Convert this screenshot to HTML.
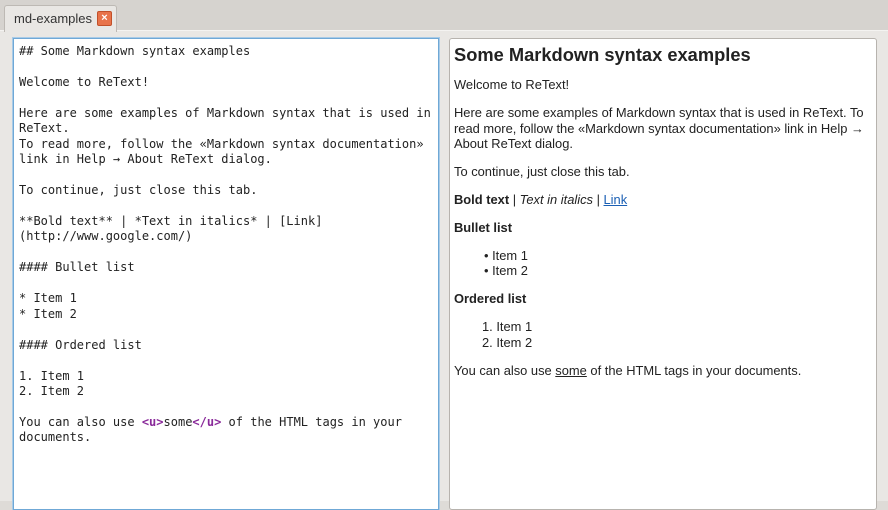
<!DOCTYPE html>
<html><head><style>
body{margin:0;width:888px;height:500px;background:#dedbd7;position:relative;overflow:hidden;font-family:"Liberation Sans",sans-serif}
.tabbar{position:absolute;left:0;top:0;width:888px;height:30px;background:#d6d3cf}
.pane{position:absolute;left:0;top:30px;width:888px;height:470px;background:#e9e7e4;border-top:1px solid #f4f3f1}
.tab{position:absolute;left:4px;top:5px;width:111px;height:26px;background:#e9e7e4;border:1px solid #bdb9b4;border-bottom:none;border-radius:3px 3px 0 0}
.tab span{position:absolute;left:9px;top:5px;font-size:13px;color:#333}
.x{position:absolute;left:92px;top:5px;width:13px;height:13px;background:#e8734a;border:1px solid #c1502a;border-radius:2px;color:#fff;font-size:11px;line-height:13px;text-align:center;font-weight:bold}
.ed{position:absolute;left:13px;top:38px;width:424px;height:470px;background:#fff;border:1px solid #6fa8d6;box-shadow:0 0 0 1px #a9cbe7}
.ed pre{margin:0;position:absolute;left:5px;top:5px;font-family:"DejaVu Sans Mono",monospace;font-size:12px;line-height:15.45px;color:#222}
.t{color:#8a2a9a;font-weight:bold}
.pv{position:absolute;left:449px;top:38px;width:426px;height:470px;background:#fff;border:1px solid #b7b3ae;border-radius:3px}
.pv div{position:absolute;left:4px;font-size:12.9px;color:#222;white-space:nowrap}
a{color:#1a5fb4;text-decoration:underline}
</style></head><body>
<div class="tabbar"></div>
<div class="pane"></div>
<div class="tab"><span>md-examples</span><div class="x">×</div></div>
<div class="ed"><pre>## Some Markdown syntax examples

Welcome to ReText!

Here are some examples of Markdown syntax that is used in
ReText.
To read more, follow the «Markdown syntax documentation»
link in Help → About ReText dialog.

To continue, just close this tab.

**Bold text** | *Text in italics* | [Link]
(http://www.google.com/)

#### Bullet list

* Item 1
* Item 2

#### Ordered list

1. Item 1
2. Item 2

You can also use <span class="t">&lt;u&gt;</span>some<span class="t">&lt;/u&gt;</span> of the HTML tags in your
documents.</pre></div>
<div class="pv">
<div style="top:5px;font-size:18.3px;font-weight:bold">Some Markdown syntax examples</div>
<div style="top:38px">Welcome to ReText!</div>
<div style="top:66px">Here are some examples of Markdown syntax that is used in ReText. To</div>
<div style="top:82px">read more, follow the «Markdown syntax documentation» link in Help →</div>
<div style="top:97px">About ReText dialog.</div>
<div style="top:125px">To continue, just close this tab.</div>
<div style="top:153px"><b>Bold text</b> | <i>Text in italics</i> | <a>Link</a></div>
<div style="top:181px;font-weight:bold">Bullet list</div>
<div style="top:209px;left:34px">• Item 1</div>
<div style="top:224px;left:34px">• Item 2</div>
<div style="top:252px;font-weight:bold">Ordered list</div>
<div style="top:280px;left:32px">1. Item 1</div>
<div style="top:296px;left:32px">2. Item 2</div>
<div style="top:324px">You can also use <u>some</u> of the HTML tags in your documents.</div>
</div>
</body></html>
